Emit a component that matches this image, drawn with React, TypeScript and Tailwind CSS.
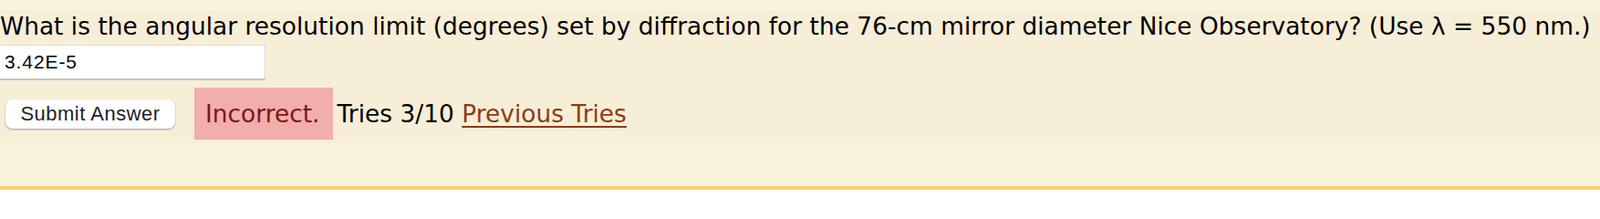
export default function App() {
  return (
    <div className="w-[1754px] h-[214px] bg-white font-['DejaVu_Sans',Verdana,sans-serif] text-black">
      <div className="h-[12px] bg-[#fbf3d9]" />
      <div className="h-[145px] bg-[#f7eed8] flex flex-col">
        <p className="mt-[2px] h-[30px] text-[26.45px] leading-[30px] whitespace-nowrap">
          What is the angular resolution limit (degrees) set by diffraction for the 76-cm mirror diameter Nice Observatory? (Use λ = 550 nm.)
        </p>
        <input
          type="text"
          defaultValue="3.42E-5"
          className="mt-[5px] w-[291px] h-[39px] bg-white border-t border-t-[#e6dcc3] border-b-2 border-b-[#c9c4bb] border-r border-r-[#ddd8cf] px-[5px] font-['Liberation_Sans',Arial,sans-serif] text-[21px] tracking-[0.9px] text-black outline-none"
        />
        <div className="mt-[8px] h-[57px] flex items-center text-[26.45px] leading-[30px]">
          <button className="ml-[6px] w-[186px] h-[32px] rounded-[8px] bg-white shadow-[0_1px_2px_rgba(0,0,0,0.35)] font-['Liberation_Sans',Arial,sans-serif] text-[22px] leading-[32px] tracking-[0.5px] text-[#222]">
            Submit Answer
          </button>
          <span className="ml-[21px] h-[57px] flex items-center pl-[12px] pr-[14px] bg-[#f2adad] text-[#7c1810]">
            Incorrect.
          </span>
          <span className="ml-[5px] whitespace-pre">Tries 3/10 </span>
          <a href="#" className="text-[#8e3b14] underline underline-offset-[4px]">
            Previous Tries
          </a>
        </div>
      </div>
      <div className="h-[47px] bg-[#fbf3d9]" />
      <div className="h-[4px] bg-[#f5d27a]" />
    </div>
  );
}
